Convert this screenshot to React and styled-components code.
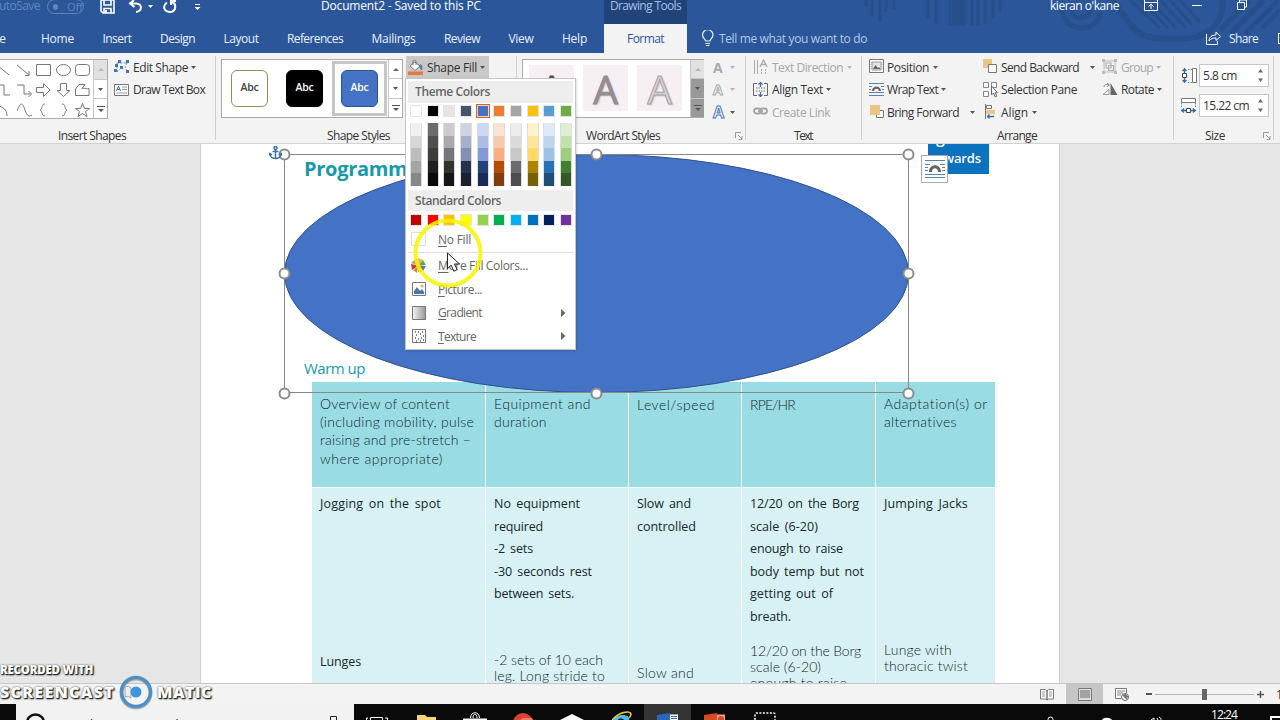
import React, { useLayoutEffect, useRef, useState } from 'react';
import styled, { createGlobalStyle, css } from 'styled-components';

const GlobalStyle = createGlobalStyle`
    * { box-sizing: border-box; }
    body {
        margin: 0;
        overflow: hidden;
        font-family: "Open Sans", "Noto Sans", sans-serif;
        font-size: 12px;
        color: #333;
    }
    svg { display: block; flex: none; }
`

// keeps a label at a fixed width by spreading its letters
function Fit({ w, children }) {
    const ref = useRef(null);
    const [spacing, setSpacing] = useState(0);
    useLayoutEffect(() => {
        const el = ref.current;
        setSpacing((w - el.getBoundingClientRect().width) / el.textContent.length);
    }, [w]);
    return (
        <FitBox $w={w}><span ref={ref} style={{ letterSpacing: spacing + 'px' }}>{children}</span></FitBox>
    )
}

const Caret = ({ off }) => (
    <svg width="5" height="3"><path d="M0 0h5L2.5 3z" fill={off ? '#b5b5b5' : '#555'} /></svg>
)

const icons = {
    editShape: <><path d="M3 4h9M3 4v9M13 4l-2 4 3 5M3 13l5-5" fill="none" stroke="#8a8a8a" strokeDasharray="2 1.5" /><path d="M1 5h3v3H1zM4 1h3v3H4zM12 1h3v3h-3zM0 10h3v3H0zM6 7h3v3H6zM12 11h3v3h-3z" fill="#3b78b5" /></>,
    textBox: <><path d="M.5 2.500h14v11H.5z" fill="#fff" stroke="#777" /><path d="M2.500 9l2-5 2 5M3.200 7.500h2.600" fill="none" stroke="#3b6ea5" /><path d="M8 5h5M8 7.500h5M2.500 11h10.500" stroke="#999" /></>,
    textDirection: <><path d="M1.500 1v14M4.500 1v14" stroke="#aaa" /><path d="M7 8l3.500-7 3.500 7M8 5.500h5" fill="none" stroke="#aaa" strokeWidth="1.300" /><path d="M8.500 10v5M12.500 10v5" stroke="#aaa" strokeDasharray="2 1" /></>,
    alignText: <><path d="M4 1.500H.5v12H4M11 1.500h3.500v12H11" fill="none" stroke="#666" /><path d="M7.500 0v5M7.500 10v5M5.500 2.500l2-2 2 2M5.500 12.500l2 2 2-2" fill="none" stroke="#3b6ea5" strokeWidth="1.200" /><path d="M3 6h9M3 9h9" stroke="#777" strokeDasharray="1.500 1" /></>,
    link: <g fill="none" stroke="#a5a5a5" strokeWidth="1.800"><rect x="1" y="4.500" width="7" height="5" rx="2.500" /><rect x="7" y="4.500" width="7" height="5" rx="2.500" /><path d="M5 7h5" /></g>,
    position: <><path d="M.5.5h14v13H.5z" fill="#fff" stroke="#777" /><path d="M3 3h9v8H3z" fill="#e5e5e5" stroke="#999" /><path d="M4 10l2.500-4L9 9l1-1 1.500 2z" fill="#666" /><path d="M2 3v8M13 3v8" stroke="#aaa" strokeDasharray="1 1" /></>,
    wrap: <><path d="M0 1.500h15M0 4.500h3M12 4.500h3M0 7.500h2M13 7.500h2M0 10.500h15M0 13.500h15" stroke="#5a83b8" /><path d="M3 9c0-6 9-6 9 0h-2.200c0-3-4.600-3-4.600 0z" fill="#666" /></>,
    forward: <><path d="M10.500 6.500h4v7h-7V11" fill="#fff" stroke="#777" /><path d="M1 1h10v10H1z" fill="#ebc583" /></>,
    backward: <><path d="M0 0h9v9H0z" fill="#ebc583" /><path d="M5.500 5.500h8v8h-8z" fill="#f9f9f9" stroke="#777" /></>,
    pane: <><path d="M.5.5h5v5h-5zM.5 9.500h5v5h-5zM8.500.5h5v5h-5z" fill="#fff" stroke="#888" /><path d="M8.500 4v9l2-2 1.800 4 1.500-.8-1.800-3.500h2.500z" fill="#fff" stroke="#666" /></>,
    align: <><path d="M2.500 0v15" stroke="#777" /><path d="M3.500 1.500h5v3h-5z" fill="#fff" stroke="#777" /><path d="M3 6h9v4H3z" fill="#ebc583" /><path d="M4 12.500h7M6.500 10.500l-2 2 2 2" fill="none" stroke="#3b6ea5" strokeWidth="1.300" /></>,
    group: <><path d="M2 2h11v11H2z" fill="none" stroke="#bbb" /><path d="M4 4h5v5H4zM6.500 6.500h5v5h-5z" fill="none" stroke="#b0b0b0" strokeWidth="1.200" /><path d="M0 0h3v3H0zM12 0h3v3h-3zM0 12h3v3H0zM12 12h3v3h-3z" fill="#bbb" /></>,
    rotate: <><path d="M8.500 1v12h7z" fill="#666" /><path d="M7 7.500v5H1z" fill="none" stroke="#999" /><path d="M2 5c0-3 3-3 5-2M5 1l2.500 2L5 4.500" fill="none" stroke="#888" /></>,
    height: <><path d="M3.500 0v15M1.500 3l2-2 2 2M1.500 12l2 2 2-2" fill="none" stroke="#2d6da9" strokeWidth="1.300" /><path d="M1.500 5.500h4v4h-4z" fill="#fff" stroke="#444" /><path d="M7 1.500h4M7 14.500h4" stroke="#888" strokeDasharray="1.500 1" /><path d="M11.500.5h4v14h-4z" fill="#fff" stroke="#777" /></>,
    width: <><path d="M.5.5h14v4H.5z" fill="#fff" stroke="#777" /><path d="M.5 5v4M14.500 5v4" stroke="#888" strokeDasharray="1.500 1" /><path d="M0 12.500h15M3 10.500l-2 2 2 2M12 10.500l2 2-2 2" fill="none" stroke="#2d6da9" strokeWidth="1.300" /><path d="M5.500 10.500h4v4h-4z" fill="#fff" stroke="#444" /></>,
    bucket: <><path d="M0 11.500h15V15H0z" fill="#e8783a" /><path d="M2 6l5-4 5 4-5 4.500z" fill="#fff" stroke="#777" /><path d="M5 5V1.500C5-.5 8-.5 8 1.500V5" fill="none" stroke="#777" /><path d="M12 4c3 1 3 5 1.500 6.500L11 7z" fill="#5b7da5" /></>,
}

const Icon = ({ name, w = 16, h = 16 }) => <svg width={w} height={h}>{icons[name]}</svg>

function Tool({ icon, text, w, caret, gap = 5, off, pad = 3 }) {
    return (
        <ToolRow $off={off} $gap={pad}>
            <Icon name={icon} />
            <Fit w={w}>{text}</Fit>
            {caret && <CaretSlot $gap={gap - pad}><Caret off={off} /></CaretSlot>}
        </ToolRow>
    )
}

const shapes = [
    'M0 2l12 10', 'M0 2l12 10M12 8v4.500H8', 'M.5 1.500h14v11H.5z', 'M.5 7a7 5.500 0 1 0 14 0a7 5.500 0 1 0-14 0', 'M3.500 1.500h8a3 3 0 0 1 3 3v5a3 3 0 0 1-3 3h-8a3 3 0 0 1-3-3v-5a3 3 0 0 1 3-3z',
    'M0 2h7v10h6', 'M0 2h7v9h7M11.500 8l3 3-3 3', 'M.5 4.500h7v-4L14 7l-6.500 6.500v-4h-7z', 'M4.500.5h6v7H14l-6.500 6L1 7.500h3.500z', 'M4 1.500h6l-3 4c3-1 5 1 7 0v7H.5V6z',
    'M0 3c6 0 10 4 10 10', 'M0 8C4-3 6 1 8 7s4 7 7 5', 'M9 1C5 1 7 6 4 7c3 1 1 6 5 6', 'M6 1c4 0 2 5 5 6-3 1-1 6-5 6', 'M7.500.5l2 5h5l-4 3 1.500 5-4.500-3-4.500 3L4.500 8.500l-4-3h5z',
]

function Scroller({ dark }) {
    return (
        <ScrollStrip>
            <ScrollCell $bg={dark === undefined ? '#fff' : '#e1e1e1'}><svg width="6" height="3"><path d="M0 3h6L3 0z" fill={dark === undefined ? '#666' : '#b5b5b5'} /></svg></ScrollCell>
            <ScrollCell $bg={dark ? '#999' : '#fff'}><Caret /></ScrollCell>
            <ScrollCell $bg={dark ? '#999' : '#fff'}><svg width="8" height="6"><path d="M0 .5h8" stroke="#555" /><path d="M1 3h6L4 6z" fill="#555" /></svg></ScrollCell>
        </ScrollStrip>
    )
}

const Launcher = () => (
    <svg width="8" height="8"><path d="M.5 6V.5H6M3 3l4 4M7 4v3.500H3.500" fill="none" stroke="#999" /></svg>
)

function TitleBar() {
    return (
        <Title>
            <Backdrop width="430" height="54">
                <g stroke="#23497f" strokeWidth="3" opacity=".55" fill="none">
                    <path d="M16 0v7M22 0v16M30 0v22M36 0v12M44 0v9M78 0v18M86 0v24M100 0v25M104 0v26M115 0v26M122 0v25M128 0v25M135 0v24M143 0v18M150 0v12" />
                    <path d="M108 0v26" strokeWidth="12" />
                    <path d="M212 8c0 26 38 26 38 4M222 10c0 10 18 10 18 0" strokeWidth="5" />
                    <path d="M262 0l20 26c10 12 20 13 46 13 30 0 45-14 45-39" strokeWidth="6" />
                    <path d="M280 0l30 28M290 0l28 28M300 0l26 28M310 0l26 28M320 0l22 25M330 0l20 22" />
                    <path d="M370 30l30-30M380 34l34-34M395 34l35-35M412 28l18-18" strokeWidth="5" />
                </g>
            </Backdrop>
            <TitleLeft>
                <AutoSave><Fit w={48}>AutoSave</Fit></AutoSave>
                <Toggle><i />Off</Toggle>
                <Quick>
                    <svg width="15" height="14"><path d="M1 0h13v13H3l-2-2zM4 0v5h7V0M4 13V8.500h7V13" fill="none" stroke="#fff" strokeWidth="1.600" /><path d="M5 10h2v3H5z" fill="#fff" /></svg>
                    <svg width="15" height="13"><path d="M6 0L2 3.500 6.500 7M2 3.500h6c7 0 6 8 0 8.500" fill="none" stroke="#fff" strokeWidth="2" /></svg>
                    <svg width="5" height="3"><path d="M0 0h5L2.500 3z" fill="#fff" /></svg>
                    <svg width="14" height="13"><path d="M4 2.500C-1 6 1 12 7 12s7-8 2-10M8 5V1h5" fill="none" stroke="#fff" strokeWidth="2" /></svg>
                    <svg width="7" height="6"><path d="M1 .5h5" stroke="#fff" /><path d="M.5 3h6l-3 3z" fill="#fff" /></svg>
                </Quick>
            </TitleLeft>
            <DocName><Fit w={160}>Document2 - Saved to this PC</Fit></DocName>
            <ToolsTab><Fit w={71}>Drawing Tools</Fit></ToolsTab>
            <User><Fit w={69}>kieran o'kane</Fit></User>
            <WindowButtons>
                <svg width="14" height="11"><path d="M.5 0v10.500h13V0M0 2.500h14M7 9V4M4.500 6.500L7 4l2.500 2.500" fill="none" stroke="#fff" /></svg>
                <svg width="10" height="10"><path d="M0 5.500h10" stroke="#fff" /></svg>
                <svg width="10" height="10"><path d="M.5 2.500h7v7h-7zM2.500 2V0h7v7H8" fill="none" stroke="#fff" /></svg>
            </WindowButtons>
        </Title>
    )
}

const tabs = [['Home', 33], ['Insert', 29], ['Design', 35], ['Layout', 35], ['References', 56], ['Mailings', 44], ['Review', 36], ['View', 25], ['Help', 25]];

function Tabs() {
    return (
        <TabBar>
            <FileTab>File</FileTab>
            <TabList>{tabs.map(([name, w]) => <Fit key={name} w={w}>{name}</Fit>)}</TabList>
            <ActiveTab><Fit w={37}>Format</Fit></ActiveTab>
            <TellMe>
                <svg width="12" height="16"><path d="M3.500 11c0-2-3-3-3-6a5 5 0 0 1 10.500 0c0 3-3 4-3 6zM3.500 13.500h4.500M4 15.500h3.500" fill="none" stroke="#e8eef8" strokeWidth="1.200" /></svg>
                <Fit w={148}>Tell me what you want to do</Fit>
            </TellMe>
            <Share>
                <svg width="15" height="14"><path d="M.5 3v10.500h11V10" fill="none" stroke="#fff" /><path d="M3 10c0-4 3-6 7-6V1l4.500 4.500L10 9.500V7C7 7 5 7.500 3 10z" fill="none" stroke="#fff" /></svg>
                <Fit w={29}>Share</Fit>
            </Share>
            <CommentEdge />
        </TabBar>
    )
}

function Ribbon() {
    return (
        <RibbonBar>
            <Group $w={216}>
                <GroupBody>
                    <ShapeGallery>
                        <ShapeGrid>{shapes.map((d, i) => <svg key={i} width="15" height="14"><path d={d} fill="none" stroke="#777" /></svg>)}</ShapeGrid>
                        <Scroller dark={false} />
                    </ShapeGallery>
                    <ToolColumn $ml={6}>
                        <Tool icon="editShape" text="Edit Shape" w={55} caret gap={3} />
                        <Tool icon="textBox" text="Draw Text Box" w={72} />
                    </ToolColumn>
                </GroupBody>
                <GroupLabel $left={58}><Fit w={68}>Insert Shapes</Fit></GroupLabel>
            </Group>
            <Group $w={301}>
                <GroupBody>
                    <StyleGallery>
                        <StyleCell><StyleTile $bg="#fff" $line="#87945a" $color="#444">Abc</StyleTile></StyleCell>
                        <StyleCell><StyleTile $bg="#000" $line="#000" $color="#fff">Abc</StyleTile></StyleCell>
                        <StyleCell $on><StyleTile $bg="#4472c4" $line="#2f528f" $color="#fff">Abc</StyleTile></StyleCell>
                        <Scroller />
                    </StyleGallery>
                    <FillButton><Icon name="bucket" /><Fit w={50}>Shape Fill</Fit><Caret /></FillButton>
                </GroupBody>
                <GroupLabel $left={111}><Fit w={63}>Shape Styles</Fit></GroupLabel>
            </Group>
            <Group $w={229}>
                <GroupBody>
                    <WordArtGallery>
                        <WordArtTile $fill="#555">A</WordArtTile>
                        <WordArtTile $fill="#948e94">A</WordArtTile>
                        <WordArtTile $fill="#d8d0d6" $outline>A</WordArtTile>
                        <Scroller dark />
                    </WordArtGallery>
                    <LetterTools>
                        <LetterTool $color="#aaa">A<Caret off /></LetterTool>
                        <LetterTool $color="#fff" $line="#aaa">A<Caret off /></LetterTool>
                        <LetterTool $color="#fff" $line="#4a7ab8" $big>A<Caret /></LetterTool>
                    </LetterTools>
                </GroupBody>
                <GroupLabel $left={69}><Fit w={74}>WordArt Styles</Fit><Corner><Launcher /></Corner></GroupLabel>
            </Group>
            <Group $w={116}>
                <GroupBody>
                    <ToolColumn $ml={7}>
                        <Tool icon="textDirection" text="Text Direction" w={71} caret off gap={4} />
                        <Tool icon="alignText" text="Align Text" w={51} caret gap={3} />
                        <Tool icon="link" text="Create Link" w={58} off />
                    </ToolColumn>
                </GroupBody>
                <GroupLabel $left={48}><Fit w={18}>Text</Fit></GroupLabel>
            </Group>
            <Group $w={312}>
                <GroupBody>
                    <ToolColumn $ml={7} $w={114}>
                        <Tool icon="position" text="Position" w={42} caret gap={4} pad={2} />
                        <Tool icon="wrap" text="Wrap Text" w={51} caret gap={3} pad={2} />
                        <Tool icon="forward" text="Bring Forward" w={72} caret gap={11} pad={2} />
                    </ToolColumn>
                    <ToolColumn $w={119}>
                        <Tool icon="backward" text="Send Backward" w={78} caret gap={11} pad={2} />
                        <Tool icon="pane" text="Selection Pane" w={76} pad={2} />
                        <Tool icon="align" text="Align" w={27} caret gap={4} pad={2} />
                    </ToolColumn>
                    <ToolColumn>
                        <Tool icon="group" text="Group" w={32} caret off gap={3} />
                        <Tool icon="rotate" text="Rotate" w={33} caret gap={3} />
                    </ToolColumn>
                </GroupBody>
                <GroupLabel $left={135}><Fit w={40}>Arrange</Fit></GroupLabel>
            </Group>
            <Group $w={100}>
                <SizeBody>
                    <SizeRow><Icon name="height" /><SizeInput><Fit w={34}>5.8 cm</Fit><Spinner /></SizeInput></SizeRow>
                    <SizeRow><Icon name="width" /><SizeInput><Fit w={46}>15.22 cm</Fit><Spinner /></SizeInput></SizeRow>
                </SizeBody>
                <GroupLabel $left={31}><Fit w={20}>Size</Fit><Corner><Launcher /></Corner></GroupLabel>
            </Group>
        </RibbonBar>
    )
}

const Spinner = () => (
    <svg width="5" height="13"><path d="M0 3.500h5L2.500 0zM0 9.500h5L2.500 13z" fill="#666" /></svg>
)

const theme = [
    ['#ffffff', '#f0f0f0', '#d6d6d6', '#bdbdbd', '#a5a5a5', '#85878a'],
    ['#000000', '#6b6b6b', '#4f4f4f', '#3d3d3d', '#1f1f1f', '#0a0a0a'],
    ['#e7e6e6', '#cdc9cf', '#aaa8aa', '#76757a', '#33332a', '#171717'],
    ['#44546a', '#cfd4e2', '#a5b0cb', '#8490b3', '#27314d', '#1a2032'],
    ['#4472c4', '#cdd8f4', '#abbce8', '#8599d4', '#22427c', '#172c58'],
    ['#ed7d31', '#fbe4d5', '#f7caac', '#f4b083', '#b34d08', '#843c0c'],
    ['#a5a5a5', '#ededed', '#dadada', '#c8c8c8', '#6b6b70', '#4d4d52'],
    ['#ffc000', '#fff2cc', '#ffe598', '#ffd965', '#ad8400', '#786000'],
    ['#5b9bd5', '#deeaf9', '#bdd6ee', '#9cc2e5', '#2573b5', '#1e4e79'],
    ['#70ad47', '#dcefd5', '#c0e2ad', '#9ccd81', '#417f33', '#355826'],
];
const standard = ['#c00000', '#ff0000', '#ffc000', '#ffff00', '#92d050', '#00b050', '#00b0f0', '#0070c0', '#002060', '#7030a0'];

function FillMenu() {
    return (
        <Menu>
            <MenuHead><Fit w={75}>Theme Colors</Fit></MenuHead>
            <SwatchRow $top={2}>{theme.map((c, i) => <Swatch key={i} $c={c[0]} $on={i === 4} />)}</SwatchRow>
            <SwatchRow $top={6}>{theme.map((c, i) => <SwatchStack key={i}>{c.slice(1).map(s => <Shade key={s} $c={s} />)}</SwatchStack>)}</SwatchRow>
            <MenuHead $second><Fit w={86}>Standard Colors</Fit></MenuHead>
            <SwatchRow $top={3}>{standard.map(c => <Swatch key={c} $c={c} />)}</SwatchRow>
            <MenuItem $first>
                <NoFillBox />
                <Fit w={33}><u>N</u>o Fill</Fit>
            </MenuItem>
            <MenuItem $line>
                <svg width="15" height="15"><path d="M7.500 7.500L7 0l5 2z" fill="#e9b557" /><path d="M7.500 7.500L12 2l3 5z" fill="#6ba34f" /><path d="M7.500 7.500L15 8l-3 5z" fill="#577e9b" /><path d="M7.500 7.500L12 14H7z" fill="#9cba61" /><path d="M7.500 7.500L6 15l-4-3z" fill="#d88c37" /><path d="M7.500 7.500L1 12 0 6z" fill="#b94632" /><path d="M7.500 7.500L0 5l6-5z" fill="#d88c6a" /></svg>
                <Fit w={90}><u>M</u>ore Fill Colors...</Fit>
            </MenuItem>
            <MenuItem>
                <svg width="14" height="14"><path d="M.5.5h13v13H.5z" fill="#fff" stroke="#777" /><path d="M2 12V9l3-4 3 4 2-2 2 3v2z" fill="#4878a8" /><circle cx="10" cy="4" r="1.500" fill="#d6b27c" /></svg>
                <Fit w={44}><u>P</u>icture...</Fit>
            </MenuItem>
            <MenuItem>
                <svg width="14" height="14"><defs><linearGradient id="grad"><stop stopColor="#f2f2f2" /><stop offset="1" stopColor="#999" /></linearGradient></defs><path d="M.5.5h13v13H.5z" fill="url(#grad)" stroke="#777" /></svg>
                <Fit w={44}><u>G</u>radient</Fit><More />
            </MenuItem>
            <MenuItem>
                <svg width="14" height="14"><path d="M.5.5h13v13H.5z" fill="#fff" stroke="#777" /><path d="M3 3h1M6 3h1M10 3h1M4 6h1M8 5h1M11 7h1M3 9h1M6 10h1M9 9h1M4 12h1M8 12h1M11 11h1" stroke="#555" strokeWidth="1.500" /></svg>
                <Fit w={38}><u>T</u>exture</Fit><More />
            </MenuItem>
        </Menu>
    )
}

const More = () => <MoreArrow width="5" height="8"><path d="M0 0l4.500 4L0 8z" fill="#666" /></MoreArrow>

const handles = [[6, 11], [318, 11], [630, 11], [6, 130], [630, 130], [6, 250], [318, 250], [630, 250]];

function SelectedShape() {
    return (
        <ShapeLayer width="650" height="262">
            <ellipse cx="318.500" cy="130.500" rx="312" ry="119" fill="#4472c4" stroke="#2f528f" />
            <path d="M6.500 11.500h624v238h-624z" fill="none" stroke="#888" />
            {handles.map(([x, y], i) => <circle key={i} cx={x + .5} cy={y + .5} r="5" fill="#fff" stroke="#8b8b8b" strokeWidth="2" />)}
        </ShapeLayer>
    )
}

// every entry is one printed line: text, width
const heads = [
    [['Overview of content', 130], ['(including mobility, pulse', 154], ['raising and pre-stretch –', 151], ['where appropriate)', 123]],
    [['Equipment and', 97], ['duration', 53]],
    [['Level/speed', 78]],
    [['RPE/HR', 45]],
    [['Adaptation(s) or', 104], ['alternatives', 73]],
];
const jogging = [
    [['Jogging on the spot', 121]],
    [['No equipment', 86], ['required', 49], ['-2 sets', 39], ['-30 seconds rest', 98], ['between sets.', 80]],
    [['Slow and', 54], ['controlled', 59]],
    [['12/20 on the Borg', 109], ['scale (6-20)', 68], ['enough to raise', 93], ['body temp but not', 114], ['getting out of', 83], ['breath.', 41]],
    [['Jumping Jacks', 84]],
];
const lunges = [
    { top: 17, plain: true, lines: [['Lunges', 41]] },
    { top: 15, lines: [['-2 sets of 10 each', 109], ['leg. Long stride to', 111]] },
    { top: 28, lines: [['Slow and', 57]] },
    { top: 6, lines: [['12/20 on the Borg', 111], ['scale (6-20)', 71], ['enough to raise', 97]] },
    { top: 5, lines: [['Lunge with', 68], ['thoracic twist', 84]] },
];

function Lines({ lines }) {
    return lines.map(([text, w]) => <div key={text}><Fit w={w}>{text}</Fit></div>)
}

function Document() {
    return (
        <DocArea>
            <Page>
                <Heading><Fit w={115}>Programme</Fit></Heading>
                <SubHeading><Fit w={61}>Warm up</Fit></SubHeading>
                <Table>
                    {heads.map((lines, i) => <HeadCell key={i} $low={i === 2 || i === 3}><Lines lines={lines} /></HeadCell>)}
                    {jogging.map((lines, i) => <BodyCell key={i}><Lines lines={lines} /></BodyCell>)}
                    {lunges.map((cell, i) => <LungeCell key={i} $top={cell.top} $plain={cell.plain}><Lines lines={cell.lines} /></LungeCell>)}
                </Table>
                <AwardsBadge><em>g</em><Fit w={45}>awards</Fit></AwardsBadge>
                <SelectedShape />
                <Anchor width="13" height="14"><circle cx="6.500" cy="2" r="1.500" /><path d="M6.500 4v9M3.500 5.500h6M1 8c0 6 11 6 11 0M0 9.500L1 7.500l2 1.500M13 9.500L12 7.500 10 9" /></Anchor>
                <LayoutOptions><svg width="20" height="20"><path d="M0 1.500h20M0 5.500h5M15 5.500h5M0 8.500h3M17 8.500h3M0 11.500h3M17 11.500h3M0 15.500h20M0 18.500h20" stroke="#5a83a8" /><path d="M4 13c0-9 12-9 12 0h-3c0-5-6-5-6 0z" fill="#666" /></svg></LayoutOptions>
            </Page>
        </DocArea>
    )
}

function StatusBar() {
    return (
        <Status>
            <svg width="14" height="13"><path d="M.5 1.500h5L7 3v9l-1.500-1h-5zM13.500 1.500h-5L7 3v9l1.500-1h5z" fill="#fff" stroke="#777" /><path d="M2 4h3M2 6h3M2 8h3M9 4h3M9 6h3M9 8h3" stroke="#999" /></svg>
            <ViewOn><svg width="14" height="13"><path d="M.5.5h13v12H.5z" fill="#ddd" stroke="#777" /><path d="M2 3h10M2 5h10M2 7h10M2 9h10" stroke="#666" /></svg></ViewOn>
            <svg width="15" height="13"><path d="M6 10.500H.5V.5h11V5" fill="#fff" stroke="#777" /><path d="M2 3h8M2 5h6M2 7h4" stroke="#888" /><circle cx="10" cy="9" r="3.500" fill="#fff" stroke="#666" /><path d="M8 7l4 4M10 6v2l3 1" stroke="#777" strokeWidth="1.500" /></svg>
            <Zoom>
                <svg width="6" height="2"><path d="M0 1h6" stroke="#555" strokeWidth="2" /></svg>
                <ZoomTrack><ZoomThumb /></ZoomTrack>
                <svg width="7" height="7"><path d="M0 3.500h7M3.500 0v7" stroke="#555" strokeWidth="1.500" /></svg>
            </Zoom>
            <Percent>100%</Percent>
        </Status>
    )
}

function Taskbar() {
    return (
        <Task>
            <Search>
                <svg width="20" height="16"><circle cx="9.500" cy="19" r="8.500" fill="none" stroke="#111" strokeWidth="2.500" /></svg>
                <SearchText>Type here to search</SearchText>
                <svg width="7" height="16"><path d="M.5 20V12.500h6V20" fill="none" stroke="#222" /></svg>
            </Search>
            <Apps>
                <svg width="22" height="16"><path d="M4.500 16v-2.500h12V16M2 14H.5v2M19 14h2.500v2" fill="none" stroke="#fff" /></svg>
                <svg width="20" height="16"><path d="M0 11h8l2 2h9v3H0z" fill="#f6d477" /></svg>
                <svg width="24" height="16"><path d="M0 14.500h24V16H0z" fill="#fff" /><path d="M7.500 14c0-7 9-7 9 0M10 14c0-5 4-5 4 0" fill="none" stroke="#fff" /></svg>
                <svg width="20" height="16"><circle cx="10" cy="19" r="10" fill="#da4437" /><path d="M7 16h13l-1-2h-9z" fill="#ef7b68" /></svg>
                <svg width="24" height="16"><path d="M0 16l12-6 12 6z" fill="#fff" /></svg>
                <svg width="20" height="16"><path d="M1 16c2-5 14-7 16-2v2h-5c-1-2-5-2-6 0z" fill="#4fb8e8" /><path d="M0 16C7 8 18 6 19 10c0 2-1 3-2 4" fill="none" stroke="#f3ce36" strokeWidth="1.500" /></svg>
                <AppOn><svg width="22" height="16"><path d="M0 11l13-2v7H0z" fill="#2b67b8" /><path d="M13 10.500h8V16h-8z" fill="#fff" /><path d="M14 12.500h6M14 14.500h6" stroke="#315f9e" /></svg></AppOn>
                <svg width="22" height="16"><path d="M0 11l13-2v7H0z" fill="#d54a27" /><path d="M13 10.500h8V16h-8z" fill="#eda18b" /><circle cx="17" cy="15" r="3" fill="#d54a27" /></svg>
                <svg width="22" height="16"><path d="M1 16v-5.500q0-1.500 1.500-1.500h17q1.500 0 1.500 1.500V16" fill="none" stroke="#fff" strokeWidth="1.500" strokeDasharray="2 1.500" /></svg>
            </Apps>
            <Tray>
                <svg width="7" height="16"><circle cx="3.500" cy="15.500" r="2.500" fill="none" stroke="#fff" /></svg>
                <svg width="10" height="16"><path d="M0 16c1-3 8-3 10 0z" fill="#fff" /></svg>
                <svg width="14" height="16"><path d="M1 16l3-2v2M7 14l1 2M9 13c2 1 2 2 2 3" fill="none" stroke="#fff" /></svg>
                <Clock><Fit w={26}>12:24</Fit></Clock>
                <Notice />
            </Tray>
        </Task>
    )
}

function App() {
    return (
        <Screen>
            <GlobalStyle />
            <TitleBar />
            <Tabs />
            <Ribbon />
            <Document />
            <StatusBar />
            <Taskbar />
            <FillMenu />
            <Pointer width="72" height="72">
                <circle cx="36" cy="36" r="32.500" fill="none" stroke="#f8f400" strokeWidth="4" opacity=".85" />
                <path d="M35.500 36v15.500l3.700-3.300 2.600 6 3.300-1.500-2.600-5.700h5z" fill="#fff" stroke="#222" />
            </Pointer>
            <Watermark>
                <MarkSmall><Fit w={93}>RECORDED WITH</Fit></MarkSmall>
                <MarkRow>
                    <Fit w={115}>SCREENCAST</Fit>
                    <svg width="34" height="36"><circle cx="17" cy="19" r="14.500" fill="none" stroke="#777" strokeWidth="4" opacity=".5" /><circle cx="17" cy="18" r="14.500" fill="none" stroke="#4f91c5" strokeWidth="3.500" /><path d="M6 13q4-2 6 1v10q-3-3-6-1z" fill="#eee" stroke="#aaa" /><circle cx="17" cy="18" r="5.500" fill="#3e96dc" /></svg>
                    <Fit w={55}>MATIC</Fit>
                </MarkRow>
            </Watermark>
        </Screen>
    )
}

const FitBox = styled.span`
    display: inline-block;
    flex: none;
    width: ${p => p.$w}px;
    white-space: nowrap;
`

const Screen = styled.div`
    position: relative;
    width: 1280px;
    height: 720px;
    display: flex;
    flex-direction: column;
    overflow: hidden;
`

const Title = styled.div`
    position: relative;
    display: flex;
    height: 24px;
    background: #2b579a;
    color: #fff;
    line-height: 12px;
    > div { flex: none; }
`

const Backdrop = styled.svg`
    position: absolute;
    left: 850px;
    top: 0;
`

const TitleLeft = styled.div`
    display: flex;
    width: 321px;
`

const AutoSave = styled.div`
    margin-left: -8px;
    width: 55px;
    color: #5f86be;
`

const Toggle = styled.div`
    display: flex;
    align-items: center;
    gap: 9px;
    width: 37px;
    height: 15px;
    margin-top: -1px;
    padding-left: 5px;
    border: 1px solid #5f86be;
    border-radius: 8px;
    font-size: 11px;
    color: #5f86be;
    i {
        width: 6px;
        height: 6px;
        border-radius: 50%;
        background: #5f86be;
    }
`

const Quick = styled.div`
    display: flex;
    align-items: center;
    height: 13px;
    margin-left: 16px;
    svg:nth-child(2) { margin-left: 13px; }
    svg:nth-child(3) { margin-left: 5px; }
    svg:nth-child(4) { margin-left: 10px; }
    svg:nth-child(5) { margin-left: 17px; }
`

const DocName = styled.div`
    width: 283px;
`

const ToolsTab = styled.div`
    width: 83px;
    padding-left: 6px;
    background: #20437a;
    color: #a9bfe0;
`

const User = styled.div`
    position: relative;
    margin-left: 363px;
    width: 94px;
`

const WindowButtons = styled.div`
    position: relative;
    display: flex;
    svg:nth-child(2) { margin-left: 34px; }
    svg:nth-child(3) { margin-left: 35px; }
`

const TabBar = styled.div`
    position: relative;
    display: flex;
    align-items: center;
    height: 29px;
    padding-bottom: 1px;
    background: linear-gradient(90deg, #2b579a 850px, transparent 850px);
    color: #e9effa;
    > div { flex: none; }
    &::before {
        content: '';
        position: absolute;
        z-index: -1;
        inset: -24px 0 0;
        background: #2b579a;
    }
`

const FileTab = styled.div`
    width: 41px;
    margin-left: -13px;
    margin-right: 13px;
`

const TabList = styled.div`
    display: flex;
    gap: 28.500px;
    width: 563px;
`

const ActiveTab = styled.div`
    display: flex;
    align-items: center;
    width: 83px;
    height: 30px;
    margin-bottom: -2px;
    padding: 0 0 2px 23px;
    background: #f3f3f3;
    color: #2b579a;
`

const TellMe = styled.div`
    display: flex;
    align-items: center;
    gap: 5px;
    width: 504px;
    margin-left: 15px;
    color: #b4c8e8;
`

const Share = styled.div`
    display: flex;
    align-items: center;
    gap: 8px;
`

const CommentEdge = styled.div`
    width: 6px;
    height: 11px;
    margin-left: 20px;
    border: 1px solid #fff;
`

const RibbonBar = styled.div`
    display: flex;
    height: 91px;
    padding-top: 3px;
    background: #f3f3f3;
    border-bottom: 1px solid #d2d2d2;
`

const Group = styled.div`
    flex: none;
    width: ${p => p.$w}px;
    height: 84px;
    border-right: 1px solid #d0d0d0;
`

const GroupBody = styled.div`
    display: flex;
    height: 70px;
`

const GroupLabel = styled.div`
    display: flex;
    padding-left: ${p => p.$left}px;
    line-height: 19px;
`

const Corner = styled.div`
    margin: 6px 2px 0 auto;
`

const ShapeGallery = styled.div`
    display: flex;
    width: 108px;
    height: 60px;
    margin-top: 3px;
    background: #fff;
    border: 1px solid #ababab;
    border-left: 0;
`

const ShapeGrid = styled.div`
    display: grid;
    grid-template-columns: repeat(5, 15px);
    column-gap: 4.500px;
    row-gap: 5.500px;
    width: 94px;
    padding-top: 3px;
    margin-left: -3px;
    margin-right: 3px;
`

const ScrollStrip = styled.div`
    display: flex;
    flex: none;
    flex-direction: column;
    width: 14px;
    margin-left: auto;
    border-left: 1px solid #c6c6c6;
`

const ScrollCell = styled.div`
    flex: 1;
    display: flex;
    align-items: center;
    justify-content: center;
    background: ${p => p.$bg};
    border-bottom: 1px solid #c6c6c6;
    &:last-child { border-bottom: 0; }
`

const ToolColumn = styled.div`
    flex: none;
    width: ${p => p.$w ? p.$w + 'px' : 'auto'};
    margin-left: ${p => p.$ml || 0}px;
`

const ToolRow = styled.div`
    display: flex;
    align-items: center;
    gap: ${p => p.$gap}px;
    height: 22.600px;
    color: ${p => p.$off ? '#a6a6a6' : '#333'};
`

const CaretSlot = styled.div`
    margin-left: ${p => p.$gap}px;
`

const StyleGallery = styled.div`
    display: flex;
    width: 182px;
    height: 59px;
    margin: 3px 0 0 5px;
    background: #fff;
    border: 1px solid #ababab;
`

const StyleCell = styled.div`
    display: flex;
    flex: none;
    align-items: center;
    justify-content: center;
    width: 55px;
    height: 55px;
    margin-top: 1px;
    ${p => p.$on && css`
        border: 3px solid #c6c6c6;
    `}
`

const StyleTile = styled.div`
    width: 37px;
    height: 37px;
    background: ${p => p.$bg};
    border: 1px solid ${p => p.$line};
    border-radius: 6px;
    color: ${p => p.$color};
    font-size: 10.500px;
    font-weight: 600;
    line-height: 32px;
    text-align: center;
    letter-spacing: -.3px;
`

const FillButton = styled.div`
    display: flex;
    align-items: center;
    gap: 3px;
    width: 83px;
    height: 23px;
    margin-left: 3px;
    padding-left: 2px;
    background: #c8c8c8;
`

const WordArtGallery = styled.div`
    display: flex;
    gap: 9px;
    width: 182px;
    height: 59px;
    margin: 3px 0 0 5px;
    padding-left: 6px;
    background: #fff;
    border: 1px solid #ababab;
    > :last-child { margin-left: -1px; }
`

const WordArtTile = styled.div`
    flex: none;
    width: 45px;
    height: 46px;
    margin-top: 5px;
    background: #f6f0f5;
    color: ${p => p.$fill};
    font-size: 39px;
    line-height: 47px;
    text-align: center;
    text-shadow: 1px 1px 2px #bbb;
    -webkit-text-stroke: 1px ${p => p.$outline ? '#aaa4aa' : p.$fill};
`

const LetterTools = styled.div`
    padding-left: 9px;
`

const LetterTool = styled.div`
    display: flex;
    align-items: center;
    justify-content: space-between;
    width: 22px;
    height: 22.500px;
    color: ${p => p.$color};
    font-size: ${p => p.$big ? 16 : 14}px;
    font-weight: 700;
    -webkit-text-stroke: 1px ${p => p.$line || 'transparent'};
`

const SizeBody = styled.div`
    display: flex;
    flex-direction: column;
    gap: 7px;
    height: 70px;
    padding: 8px 0 0 7px;
`

const SizeRow = styled.div`
    display: flex;
    align-items: center;
    gap: 2px;
`

const SizeInput = styled.div`
    display: flex;
    align-items: center;
    justify-content: space-between;
    width: 70px;
    height: 23px;
    padding: 0 5px 0 3px;
    background: #fff;
    border: 1px solid #c6c6c6;
`

const DocArea = styled.div`
    height: 539px;
    background: #e6e6e6;
`

const Page = styled.div`
    position: relative;
    width: 860px;
    height: 539px;
    margin-left: 200px;
    background: #fff;
    border: solid #d0d0d0;
    border-width: 0 1px;
    overflow: hidden;
`

const Heading = styled.div`
    height: 211px;
    padding: 11px 0 0 103px;
    color: #1799ab;
    font-size: 20px;
    font-weight: 700;
    line-height: 28px;
`

const SubHeading = styled.div`
    height: 27px;
    padding-left: 103px;
    color: #1799ab;
    font-size: 15px;
    line-height: 26px;
`

const Table = styled.div`
    display: grid;
    grid-template-columns: 173px 142px 112px 133px 119px;
    grid-template-rows: 105px 150px 51px;
    column-gap: 1px;
    width: 683px;
    margin-left: 111px;
`

const Cell = styled.div`
    padding-left: 8px;
    color: #15282c;
`

const HeadCell = styled(Cell)`
    padding-top: ${p => p.$low ? 14 : 13}px;
    background: #99dce4;
    font-family: Lato, sans-serif;
    font-size: 14px;
    font-weight: 300;
    line-height: 18.200px;
`

const BodyCell = styled(Cell)`
    padding-top: 5px;
    border-top: 1px solid #fff;
    background: #d8f1f4;
    font-size: 12.500px;
    line-height: 22.600px;
    word-spacing: 2px;
`

const LungeCell = styled(Cell)`
    padding-top: ${p => p.$top}px;
    background: #d8f1f4;
    font-family: ${p => p.$plain ? '"Open Sans"' : 'Lato'}, sans-serif;
    font-size: ${p => p.$plain ? 12.5 : 14}px;
    font-weight: ${p => p.$plain ? 400 : 300};
    line-height: 16px;
`

const AwardsBadge = styled.div`
    position: absolute;
    left: 727px;
    top: 0;
    width: 61px;
    height: 30px;
    padding: 7px 0 0 8px;
    background: #0b72bd;
    color: #fff;
    font-size: 13px;
    font-weight: 600;
    line-height: 15px;
    em {
        position: absolute;
        top: -14px;
        left: 8px;
        font-style: normal;
        font-size: 16px;
    }
`

const ShapeLayer = styled.svg`
    position: absolute;
    left: 77px;
    top: -1px;
`

const Anchor = styled.svg`
    position: absolute;
    left: 68px;
    top: 2px;
    fill: none;
    stroke: #3b73a5;
    stroke-width: 1.500;
`

const LayoutOptions = styled.div`
    position: absolute;
    left: 720px;
    top: 11px;
    width: 27px;
    height: 28px;
    padding: 3px;
    background: #fff;
    border: 1px solid #ababab;
`

const Status = styled.div`
    display: flex;
    align-items: center;
    height: 21px;
    padding-left: 1040px;
    background: #f3f3f3;
    border-top: 1px solid #c6c6c6;
    > div { flex: none; }
`

const ViewOn = styled.div`
    display: flex;
    align-items: center;
    justify-content: center;
    width: 37px;
    height: 20px;
    margin: 0 12px;
    background: #c6c6c6;
`

const Zoom = styled.div`
    display: flex;
    align-items: center;
    gap: 3px;
    margin-left: 16px;
`

const ZoomTrack = styled.div`
    display: flex;
    align-items: center;
    justify-content: center;
    width: 99px;
    height: 11px;
    background: linear-gradient(#b5b5b5, #b5b5b5) center / 100% 1px no-repeat;
`

const ZoomThumb = styled.div`
    width: 5px;
    height: 11px;
    background: #666;
`

const Percent = styled.div`
    margin-left: 12px;
    white-space: nowrap;
`

const Task = styled.div`
    display: flex;
    height: 16px;
    background: #0b0a0b;
    overflow: hidden;
    > div { flex: none; }
`

const Search = styled.div`
    display: flex;
    width: 338px;
    margin-left: 16px;
    padding-left: 10px;
    background: #f2f2f2;
`

const SearchText = styled.div`
    width: 284px;
    padding: 11px 0 0 9px;
    color: #333;
    font-size: 14px;
`

const Apps = styled.div`
    display: grid;
    grid-template-columns: 51px 46px 50px 47px 52px 32px 60px 50px 22px;
    margin-left: 12px;
`

const AppOn = styled.div`
    width: 47px;
    padding-left: 13px;
    background: #343434;
`

const Tray = styled.div`
    display: flex;
    margin-left: 271px;
    svg:nth-child(2) { margin-left: 48px; }
    svg:nth-child(3) { margin-left: 38px; }
`

const Clock = styled.div`
    margin-left: 47px;
    padding-top: 3px;
    color: #fff;
    line-height: 16px;
`

const Notice = styled.div`
    width: 14px;
    height: 10px;
    margin: 12px 0 0 33px;
    border: 2px solid #fff;
`

const Menu = styled.div`
    position: absolute;
    left: 405px;
    top: 78px;
    width: 171px;
    height: 272px;
    padding: 2px;
    background: #fff;
    border: 1px solid #c6c6c6;
    color: #666;
    box-shadow: 1px 1px 2px rgba(0, 0, 0, .15);
`

const MenuHead = styled.div`
    height: ${p => p.$second ? 21 : 22}px;
    margin-top: ${p => p.$second ? 4 : 0}px;
    padding-left: 7px;
    background: #eee;
    font-weight: 600;
    line-height: ${p => p.$second ? 21 : 22}px;
`

const SwatchRow = styled.div`
    display: flex;
    justify-content: space-between;
    padding: ${p => p.$top}px 1px 0 2px;
`

const Swatch = styled.div`
    width: 12px;
    height: 12px;
    background: ${p => p.$c};
    background-clip: ${p => p.$on ? 'border-box' : 'padding-box'};
    border: 1px solid rgba(210, 210, 210, .6);
    ${p => p.$on && css`
        border-color: #f0d4c0;
        outline: 1px solid #d5652d;
    `}
`

const SwatchStack = styled.div`
    width: 12px;
    border: 1px solid #ddd;
    border-width: 0 1px;
`

const Shade = styled.div`
    height: 12.500px;
    background: ${p => p.$c};
`

const MenuItem = styled.div`
    position: relative;
    display: flex;
    align-items: center;
    height: ${p => p.$first ? 26 : p.$line ? 25 : 23.5}px;
    padding: ${p => p.$line || p.$first ? 1 : 2}px 0 0 3px;
    border-top: ${p => p.$line ? '1px solid #ddd' : '0'};
    > svg:first-child { margin-right: 12px; }
    > svg[width="14"]:first-child { margin-left: 1px; }
    u { text-underline-offset: 2px; }
`

const NoFillBox = styled.div`
    width: 15px;
    height: 14px;
    margin-right: 12px;
    border: 1px solid #ddd;
`

const MoreArrow = styled.svg`
    margin: 0 7px 0 auto;
`

const Pointer = styled.svg`
    position: absolute;
    left: 412px;
    top: 217px;
`

const Watermark = styled.div`
    position: absolute;
    left: 0;
    top: 661px;
    color: #fff;
    font-family: "Open Sans", sans-serif;
    font-weight: 800;
    text-shadow: 1px 1px 1px #222, 0 0 2px #555, 1px 1px 2px #444;
`

const MarkSmall = styled.div`
    height: 13px;
    font-size: 11.500px;
    line-height: 17px;
`

const MarkRow = styled.div`
    display: flex;
    align-items: center;
    gap: 4px;
    font-size: 16px;
    line-height: 20px;
`

export default App;
